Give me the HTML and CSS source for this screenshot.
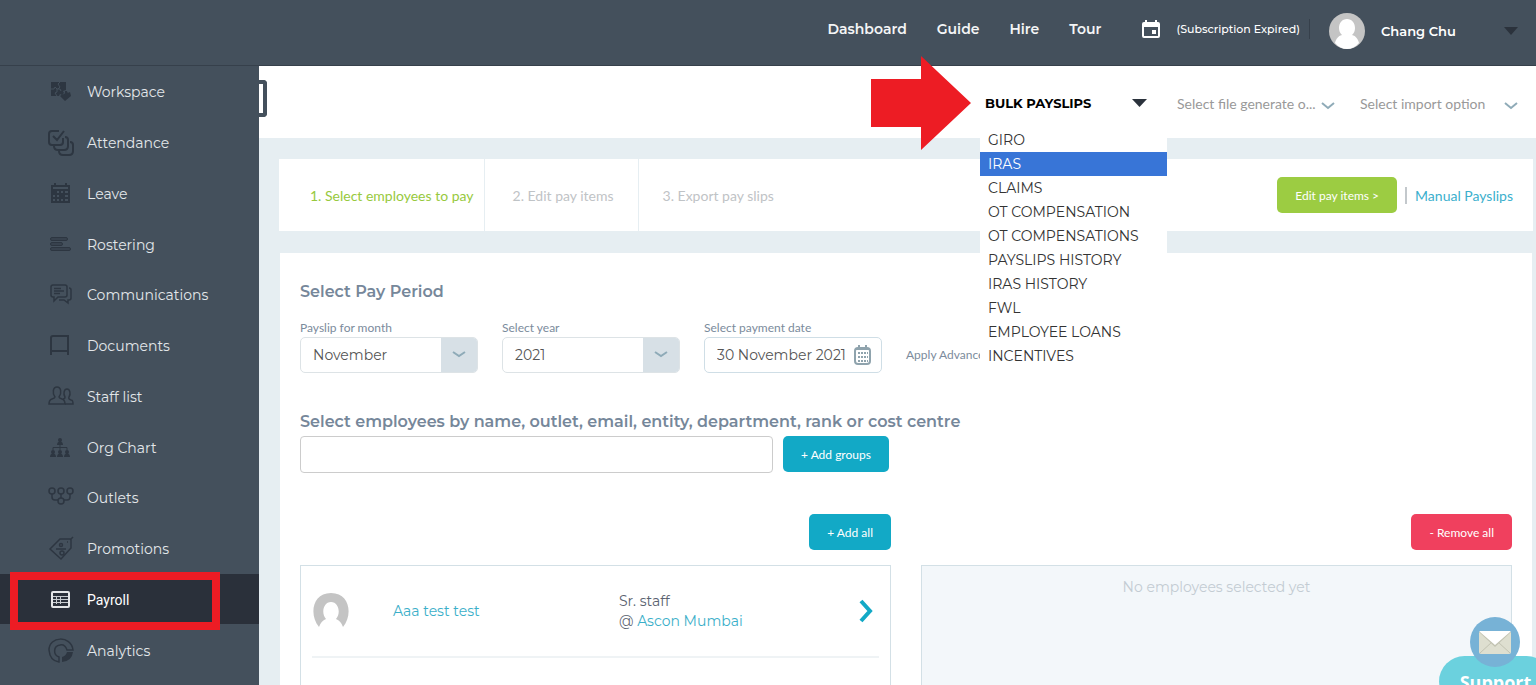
FILE: index.html
```html
<!DOCTYPE html>
<html lang="en">
<head>
    <meta charset="utf-8">
    <title>Payroll</title>
    <link rel="stylesheet" href="styles.css">
</head>
<body>
    <header class="header">
        <nav class="top-nav">
            <a href="#dashboard">Dashboard</a>
            <a href="#guide">Guide</a>
            <a href="#hire">Hire</a>
            <a href="#tour">Tour</a>
        </nav>
        <a class="subscription" href="#subscription">
            <svg width="20" height="20" viewBox="0 0 20 20"><path fill="#fff" fill-rule="evenodd" d="M4 1h2v2h8V1h2v2h1q2 0 2 2v12q0 2-2 2H3q-2 0-2-2V5q0-2 2-2h1zM3 8v9h14V8zm8 3h4v4h-4z"/></svg>
            <span>(Subscription Expired)</span>
        </a>
        <button class="user" type="button">
            <svg class="user__avatar" width="36" height="36" viewBox="0 0 36 36"><circle cx="18" cy="18" r="18" fill="#c4c4c4"/><path fill="#fff" d="M18 6c5 0 8 4 8 9 0 3-1 5-3 7 4 1 6 4 7 8-7 8-17 8-24 0 1-4 3-7 7-8-2-2-3-4-3-7 0-5 3-9 8-9z"/></svg>
            <span class="user__name">Chang Chu</span>
            <svg width="14" height="8" viewBox="0 0 14 8"><path fill="#2b323c" d="M0 0h14L7 8z"/></svg>
        </button>
    </header>

    <div class="wrapper">
        <aside class="sidebar">
            <ul class="menu">
                <li class="menu__item"><a class="menu__link" href="#workspace">
                    <svg width="26" height="26" viewBox="0 0 26 26"><path fill="#2d3641" d="M3 3h15v8l-3 1 1 2-2 2-2-1-1 2H3z"/><path fill="none" stroke="#44505c" d="M3 10h3l1-2 2 2h3l1 2M12 3l-2 2 2 3-2 2M9 10v3l-2 1 2 3"/><path fill="#2d3641" d="M15 15q2 1 2-3h2q0 3 3 1l1 4-6 5-5-5z"/></svg>
                    Workspace</a></li>
                <li class="menu__item"><a class="menu__link" href="#attendance">
                    <svg width="26" height="26" viewBox="0 0 26 26"><g fill="none" stroke="#2d3641" stroke-width="2"><path d="M11 1H4Q1 1 1 4v8q0 3 3 3h8q3 0 3-3V8M5 6l4 4 7-9M6 16q0 4 4 4h6q4 0 4-4v-6q0-3-3-3M11 21q0 4 4 4h6q4 0 4-4v-6q0-3-3-3"/></g></svg>
                    Attendance</a></li>
                <li class="menu__item"><a class="menu__link" href="#leave">
                    <svg width="26" height="26" viewBox="0 0 26 26"><path fill="#2d3641" fill-rule="evenodd" d="M6 2h2v2h9V2h2v2h3v18H3V4h3zM5 6v2h15V6zM9 10v2h2v-2zM13 10v2h2v-2zM17 10v2h3v-2zM5 14v2h2v-2zM9 14v2h2v-2zM17 14v2h3v-2zM5 18v2h2v-2zM9 18v2h2v-2zM13 18v2h2v-2zM17 18v2h3v-2z"/></svg>
                    Leave</a></li>
                <li class="menu__item"><a class="menu__link" href="#rostering">
                    <svg width="26" height="26" viewBox="0 0 26 26"><g fill="#38424e" stroke="#2d3641"><rect x="2.500" y="5.500" width="17" height="3" rx="1.500"/><rect x="2.500" y="10.500" width="12" height="3" rx="1.500"/><rect x="2.500" y="15.500" width="20" height="3" rx="1.500"/></g></svg>
                    Rostering</a></li>
                <li class="menu__item"><a class="menu__link" href="#communications">
                    <svg width="26" height="26" viewBox="0 0 26 26"><g fill="none" stroke="#2d3641" stroke-width="1.500"><path d="M5 3h12q2 0 2 2v8q0 2-2 2h-7l-4 4v-4H5q-2 0-2-2V5q0-2 2-2zM21 6q2 0 2 2v8q0 2-2 2h-1v3l-4-3h-5M6 6.500h7M6 9h10M6 11.500h6"/></g></svg>
                    Communications</a></li>
                <li class="menu__item"><a class="menu__link" href="#documents">
                    <svg width="26" height="26" viewBox="0 0 26 26"><path fill="none" stroke="#2d3641" stroke-width="2" d="M3 22V5q0-2 2-2h15v19M3 18h17"/></svg>
                    Documents</a></li>
                <li class="menu__item"><a class="menu__link" href="#staff">
                    <svg width="26" height="26" viewBox="0 0 26 26"><g fill="none" stroke="#2d3641" stroke-width="1.500"><path d="M1 20q0-4 3-5 3-1 3-2c-3-4-2-10 2-10s5 6 2 10q0 1 3 2 3 1 3 5z"/><path d="M17 20h8q0-4-2-4-3-1-2-3c2-3 1-8-2-8s-4 5-2 8q0 2-2 2"/></g></svg>
                    Staff list</a></li>
                <li class="menu__item"><a class="menu__link" href="#org">
                    <svg width="26" height="26" viewBox="0 0 26 26"><g fill="#2d3641"><circle cx="12" cy="5" r="2"/><path d="M9 10q0-3 3-4 3 1 3 4z"/><circle cx="5" cy="17" r="2"/><path d="M2 22q0-3 3-4 3 1 3 4z"/><circle cx="12" cy="17" r="2"/><path d="M9 22q0-3 3-4 3 1 3 4z"/><circle cx="19" cy="17" r="2"/><path d="M16 22q0-3 3-4 3 1 3 4z"/></g><path fill="none" stroke="#2d3641" d="M12 10v5M5 15v-2.500h14V15"/></svg>
                    Org Chart</a></li>
                <li class="menu__item"><a class="menu__link" href="#outlets">
                    <svg width="26" height="26" viewBox="0 0 26 26"><g fill="none" stroke="#2d3641" stroke-width="1.500"><circle cx="4" cy="6" r="3"/><circle cx="13" cy="6" r="3"/><circle cx="22" cy="6" r="3"/><circle cx="13" cy="16" r="3"/><path d="M13 9v4M4 9v3q0 3 3 3h3M22 9v3q0 3-3 3h-3"/></g></svg>
                    Outlets</a></li>
                <li class="menu__item"><a class="menu__link" href="#promotions">
                    <svg width="26" height="26" viewBox="0 0 26 26"><g fill="none" stroke="#2d3641" stroke-width="1.500"><path d="M2 13L12 3h11v9L13 23zM22 4l3-3M8 13h10"/><circle cx="13" cy="9" r="1.500"/><circle cx="14" cy="17" r="2"/><path d="M19 6h1"/></g></svg>
                    Promotions</a></li>
                <li class="menu__item menu__item--active"><a class="menu__link" href="#payroll">
                    <svg width="26" height="26" viewBox="0 0 26 26"><rect x="4" y="5" width="17" height="15" rx="1" fill="none" stroke="#e4e6e8" stroke-width="2"/><path fill="none" stroke="#c8ccd0" d="M5 9.500h15M5 12.500h15M5 15.500h15M8.500 9v8M12.500 9v8"/></svg>
                    Payroll</a></li>
                <li class="menu__item"><a class="menu__link" href="#analytics">
                    <svg width="26" height="26" viewBox="0 0 26 26"><path fill="none" stroke="#2d3641" stroke-width="1.500" d="M11 24v-5C5 17 5 8 12 7q5-1 7 5h6C23-3 1-2 1 12q1 11 10 12z"/><path fill="#2d3641" d="M14 19q4-1 5-5h6q-1 9-11 10z"/></svg>
                    Analytics</a></li>
            </ul>
        </aside>

        <main class="content">
            <button class="menu-toggler" type="button" aria-label="Toggle menu"></button>

            <div class="toolbar">
                <div class="bulk">
                    <svg class="bulk__arrow" width="100" height="94" viewBox="0 0 100 94"><path fill="#ed1c24" d="M0 23h50V0l50 47-50 47V71H0z"/></svg>
                    <select class="bulk__select" aria-label="Bulk payslips">
                        <option>BULK PAYSLIPS</option>
                    </select>
                    <svg class="bulk__caret" width="15" height="8" viewBox="0 0 15 8"><path fill="#2b323c" d="M0 0h15L7.500 8z"/></svg>
                    <ul class="bulk__list">
                        <li>GIRO</li>
                        <li class="selected">IRAS</li>
                        <li>CLAIMS</li>
                        <li>OT COMPENSATION</li>
                        <li>OT COMPENSATIONS</li>
                        <li>PAYSLIPS HISTORY</li>
                        <li>IRAS HISTORY</li>
                        <li>FWL</li>
                        <li>EMPLOYEE LOANS</li>
                        <li>INCENTIVES</li>
                    </ul>
                </div>
                <div class="plain-select">
                    <select aria-label="File to generate">
                        <option>Select file generate o...</option>
                    </select>
                    <svg width="14" height="8" viewBox="0 0 14 8"><path d="M1 1l6 5 6-5"/></svg>
                </div>
                <div class="plain-select">
                    <select aria-label="Import option">
                        <option>Select import option</option>
                    </select>
                    <svg width="14" height="8" viewBox="0 0 14 8"><path d="M1 1l6 5 6-5"/></svg>
                </div>
            </div>

            <div class="steps">
                <a class="steps__item steps__item--current" href="#step1">1. Select employees to pay</a>
                <a class="steps__item" href="#step2">2. Edit pay items</a>
                <a class="steps__item" href="#step3">3. Export pay slips</a>
                <div class="steps__actions">
                    <button class="btn btn--green" type="button">Edit pay items &gt;</button>
                    <a class="manual" href="#manual">Manual Payslips</a>
                </div>
            </div>

            <section class="card">
                <h2>Select Pay Period</h2>
                <div class="period">
                    <div class="field">
                        <label for="month">Payslip for month</label>
                        <div class="field__box">
                            <select id="month"><option>November</option></select>
                            <span class="field__arrow"><svg width="14" height="8" viewBox="0 0 14 8"><path d="M1 1l6 4 6-4"/></svg></span>
                        </div>
                    </div>
                    <div class="field">
                        <label for="year">Select year</label>
                        <div class="field__box">
                            <select id="year"><option>2021</option></select>
                            <span class="field__arrow"><svg width="14" height="8" viewBox="0 0 14 8"><path d="M1 1l6 4 6-4"/></svg></span>
                        </div>
                    </div>
                    <div class="field">
                        <label for="date">Select payment date</label>
                        <div class="field__box field__box--date">
                            <input id="date" type="text" value="30 November 2021">
                            <svg width="18" height="20" viewBox="0 0 18 20"><g fill="none" stroke="#8fa3ad"><rect x="1" y="3" width="15" height="16" rx="3" stroke-width="2"/><path stroke-width="2" d="M5 0v4M12 0v4M2 4h13"/><path stroke-width="2" stroke-dasharray="2 1" d="M4 8h10M4 12h10M4 16h10"/></g></svg>
                        </div>
                    </div>
                    <span class="period__advance">Apply Advance</span>
                </div>

                <h2><label for="employees">Select employees by name, outlet, email, entity, department, rank or cost centre</label></h2>
                <div class="search">
                    <input id="employees" type="text">
                    <button class="btn" type="button">+ Add groups</button>
                </div>

                <div class="lists">
                    <div class="lists__col">
                        <button class="btn" type="button">+ Add all</button>
                        <ul class="people">
                            <li class="person">
                                <svg width="36" height="36" viewBox="0 0 36 36"><path fill="#c4c4c4" d="M6 34C-4 22-1 0 18 0s22 22 12 34q-2-6-7-8c5-5 3-17-5-17s-10 12-5 17q-5 2-7 8z"/></svg>
                                <a class="person__name" href="#person">Aaa test test</a>
                                <div class="person__job">Sr. staff<br>@ <a href="#outlet">Ascon Mumbai</a></div>
                                <button class="person__add" type="button" aria-label="Add"><svg width="14" height="24" viewBox="0 0 14 24"><path fill="none" stroke="#12a9c6" stroke-width="4" d="M2 2l9 10-9 10"/></svg></button>
                            </li>
                        </ul>
                    </div>
                    <div class="lists__col">
                        <button class="btn btn--red" type="button">- Remove all</button>
                        <div class="people people--empty">No employees selected yet</div>
                    </div>
                </div>
            </section>
        </main>
    </div>

    <button class="support" type="button">
        <svg class="support__icon" width="50" height="50" viewBox="0 0 50 50"><circle cx="25" cy="25" r="25" fill="#77b2d6"/><rect x="9" y="14" width="32" height="23" rx="2" fill="#dedfd0"/><path d="M10 36l12-11M40 36L28 25" stroke="#c2c3b2"/><path d="M9 15l16 15 16-15" fill="#c2c3b2"/><path d="M10 14h30q1 0 0 1L25 28 10 15q-1-1 0-1z" fill="#fff"/></svg>
        Support
    </button>
</body>
</html>
```
FILE: styles.css
```css
:root {
  --slate: #44505c;
  --dark: #2a303a;
  --teal: #12a9c6;
  --pale: #e6eef2;
  --heading: "Montserrat", "Inter", sans-serif;
  --text: "Lato", sans-serif;
}

* {
  padding: 0;
  margin: 0;
  box-sizing: border-box;
}

body {
  min-height: 100vh;
  display: flex;
  flex-direction: column;
  font-family: var(--heading);
  font-size: 14px;
  background: var(--pale);
}

a {
  text-decoration: none;
}

ul {
  list-style-type: none;
}

button,
select,
input {
  font: inherit;
  border: none;
  background: none;
}

select {
  appearance: none;
}

/* header */

.header {
  height: 66px;
  padding: 0 18px 8px 0;
  display: flex;
  align-items: center;
  justify-content: flex-end;
  background: var(--slate);
  border-bottom: 1px solid #36404b;
}

.top-nav {
  display: flex;
  gap: 30px;
  margin-right: 40px;
}

.top-nav a {
  color: #f4f5f6;
  font-weight: 600;
}

.subscription {
  display: flex;
  align-items: center;
  gap: 15px;
  padding-right: 9px;
  color: #fff;
  font-size: 11px;
  font-weight: 500;
  border-right: 1px solid #36404b;
}

.user {
  display: flex;
  align-items: center;
  margin-left: 19px;
  padding-top: 4px;
  color: #fff;
}

.user__name {
  width: 123px;
  margin-left: 16px;
  text-align: left;
  font-size: 13px;
  font-weight: 600;
}

/* sidebar */

.wrapper {
  flex: 1;
  display: flex;
}

.sidebar {
  width: 259px;
  display: flex;
  padding-bottom: 10px;
  background: var(--slate);
  z-index: 1;
}

.menu {
  flex: 1;
  display: flex;
  flex-direction: column;
}

.menu__item {
  flex: 1;
  min-height: 40px;
  display: flex;
  position: relative;
}

.menu__link {
  flex: 1;
  display: flex;
  align-items: center;
  gap: 13px;
  padding: 2px 0 0 48px;
  color: #e3e7ea;
}

.menu__item--active {
  background: var(--dark);
}

.menu__item--active .menu__link {
  color: #fff;
  font-family: "Roboto", sans-serif;
}

/* red frame round the active item */
.menu__item--active::after {
  content: "";
  position: absolute;
  top: -2px;
  right: 39px;
  bottom: -6px;
  left: 10px;
  border: 8px solid #ed1c24;
  pointer-events: none;
}

/* content */

.content {
  flex: 1;
  min-width: 0;
  display: flex;
  flex-direction: column;
  position: relative;
}

.menu-toggler {
  position: absolute;
  top: 14px;
  left: 0;
  width: 8px;
  height: 37px;
  border: 4px solid var(--slate);
  border-left: none;
  border-radius: 0 4px 4px 0;
}

.toolbar {
  height: 72px;
  display: flex;
  justify-content: flex-end;
  align-items: center;
  gap: 10px;
  padding: 2px 18px 0 0;
  background: #fff;
}

.bulk {
  width: 187px;
  position: relative;
  display: flex;
  align-items: center;
}

.bulk__arrow {
  position: absolute;
  right: calc(100% + 9px);
  top: -35px;
}

.bulk__select {
  width: 152px;
  height: 24px;
  padding-left: 5px;
  color: #000;
  font-size: 13px;
  font-weight: 700;
}

.bulk__list {
  position: absolute;
  top: 37px;
  left: 0;
  right: 0;
  z-index: 2;
  line-height: 24px;
  background: #fff;
  color: #333;
}

.bulk__list li {
  padding-left: 8px;
}

.bulk__list .selected {
  background: #3875d7;
  color: #fff;
}

.plain-select {
  display: flex;
  align-items: center;
}

.plain-select:last-child {
  margin-left: 15px;
}

.plain-select select {
  width: 144px;
  font-family: var(--text);
  color: #999;
}

.plain-select svg,
.field__arrow svg {
  fill: none;
  stroke: #8fabb8;
  stroke-width: 2;
}

.plain-select svg {
  margin-top: 6px;
}

.steps {
  height: 72px;
  margin: 21px 3px 0 20px;
  display: flex;
  background: #fff;
  font-family: var(--text);
}

.steps__item {
  display: flex;
  align-items: center;
  padding: 0 24px;
  color: #bfc3c6;
}

.steps__item + .steps__item {
  border-left: 1px solid var(--pale);
}

.steps__item:nth-child(2) {
  padding-left: 28px;
}

.steps__item--current {
  padding: 0 10px 0 31px;
  color: #97c93d;
}

.steps__actions {
  margin-left: auto;
  padding-right: 20px;
  display: flex;
  align-items: center;
  gap: 8px;
}

.manual {
  padding-left: 8px;
  border-left: 2px solid #c3c8cc;
  color: #3bafcd;
}

.btn {
  height: 36px;
  padding: 0 18px;
  border-radius: 5px;
  color: #fff;
  background: var(--teal);
  font-family: var(--text);
  font-size: 12px;
}

.btn--green {
  background: #9ccc42;
}

.btn--red {
  background: #f0405e;
}

.card {
  flex: 1;
  display: flex;
  flex-direction: column;
  margin: 22px 4px 0 21px;
  padding: 28px 20px 0;
  background: #fff;
}

.card h2 {
  color: #76879a;
  font-size: 16px;
  font-weight: 600;
  line-height: 22px;
}

.period {
  display: flex;
  align-items: flex-end;
  gap: 24px;
  margin: 16px 0 38px;
}

.field {
  width: 178px;
}

.field label,
.period__advance {
  display: block;
  color: #7b8b9c;
  font-family: var(--text);
  font-size: 12px;
  line-height: 18px;
}

.period__advance {
  line-height: 36px;
}

.field__box {
  height: 36px;
  display: flex;
  align-items: center;
  border: 1px solid #dde3e6;
  border-radius: 5px;
  overflow: hidden;
}

.field__box select,
.field__box input {
  flex: 1;
  min-width: 0;
  padding-left: 12px;
  color: #555;
}

.field__arrow {
  width: 36px;
  align-self: stretch;
  display: flex;
  align-items: center;
  justify-content: center;
  background: #d7e0e6;
}

.field__box--date {
  padding-right: 9px;
  border-color: #cfdee6;
}

.search {
  display: flex;
  gap: 10px;
  margin: 3px 0 41px;
}

.search input {
  width: 473px;
  height: 37px;
  padding: 0 10px;
  border: 1px solid #ccc;
  border-radius: 4px;
}

.lists {
  flex: 1;
  display: grid;
  grid-template-columns: 1fr 1fr;
  gap: 30px;
}

.lists__col {
  display: flex;
  flex-direction: column;
  align-items: flex-end;
  gap: 15px;
}

.people {
  flex: 1;
  width: 100%;
  min-height: 120px;
  padding: 0 11px;
  border: 1px solid #d3e0e6;
  border-bottom: none;
}

.people--empty {
  padding-top: 10px;
  background: #f3f7fa;
  color: #c3ccd3;
  line-height: 22px;
  text-align: center;
}

.person {
  height: 92px;
  display: flex;
  align-items: center;
  padding: 0 6px 0 1px;
  border-bottom: 2px solid #eff3f5;
  color: #5a6270;
  line-height: 20px;
}

.person a {
  color: #3bafc9;
}

.person__name {
  width: 226px;
  margin-left: 44px;
}

.person__job {
  flex: 1;
}

.person__add {
  height: 24px;
}

/* chat badge */

.support {
  position: fixed;
  right: -16px;
  bottom: -22px;
  z-index: 3;
  width: 113px;
  height: 51px;
  border-radius: 26px;
  background: #6bd1de;
  color: #fff;
  font-family: "Open Sans", sans-serif;
  font-size: 18px;
  font-weight: 700;
}

.support__icon {
  position: absolute;
  left: 31px;
  top: -39px;
}
```
